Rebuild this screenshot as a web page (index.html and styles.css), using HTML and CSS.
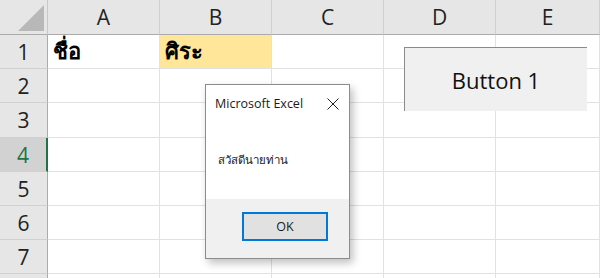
FILE: index.html
```html
<!DOCTYPE html>
<html lang="th">
<head>
    <meta charset="UTF-8">
    <title>Excel MsgBox</title>
    <link rel="stylesheet" href="styles.css">
</head>
<body>
    <div class="sheet">
        <div class="grid">
            <div class="corner"><span class="tri"></span></div>
            <div class="col-head">A</div>
            <div class="col-head">B</div>
            <div class="col-head">C</div>
            <div class="col-head">D</div>
            <div class="col-head">E</div>

            <div class="row-head">1</div>
            <div class="cell bold">ชื่อ</div>
            <div class="cell bold fill">ศิระ</div>
            <div class="cell"></div><div class="cell"></div><div class="cell"></div>

            <div class="row-head">2</div>
            <div class="cell"></div><div class="cell"></div><div class="cell"></div><div class="cell"></div><div class="cell"></div>

            <div class="row-head">3</div>
            <div class="cell"></div><div class="cell"></div><div class="cell"></div><div class="cell"></div><div class="cell"></div>

            <div class="row-head active">4</div>
            <div class="cell"></div><div class="cell"></div><div class="cell"></div><div class="cell"></div><div class="cell"></div>

            <div class="row-head">5</div>
            <div class="cell"></div><div class="cell"></div><div class="cell"></div><div class="cell"></div><div class="cell"></div>

            <div class="row-head">6</div>
            <div class="cell"></div><div class="cell"></div><div class="cell"></div><div class="cell"></div><div class="cell"></div>

            <div class="row-head">7</div>
            <div class="cell"></div><div class="cell"></div><div class="cell"></div><div class="cell"></div><div class="cell"></div>

            <div class="row-head"></div>
            <div class="cell"></div><div class="cell"></div><div class="cell"></div><div class="cell"></div><div class="cell"></div>
        </div>

        <div class="form-button">Button 1</div>

        <div class="msgbox">
            <div class="msg-title">
                <span>Microsoft Excel</span>
                <svg class="close" width="12" height="12" viewBox="0 0 12 12">
                    <path d="M0.5 0.5 L11.5 11.5 M11.5 0.5 L0.5 11.5" stroke="#222" stroke-width="1" fill="none"/>
                </svg>
            </div>
            <div class="msg-body">สวัสดีนายท่าน</div>
            <div class="msg-foot">
                <span class="ok-btn">OK</span>
            </div>
        </div>
    </div>
</body>
</html>
```

FILE: styles.css
```css
body { margin: 0; padding: 0; background: #fff; font-family: "Open Sans", "Noto Sans", sans-serif; overflow: hidden; }
.sheet { position: relative; width: 600px; height: 278px; overflow: hidden; }
.grid { display: grid; grid-template-columns: 48px 112px 112px 112px 112px 1fr; grid-template-rows: 35px 34px 34px 35px 34px 34px 34px 34px 34px; }
.grid > div { box-sizing: border-box; border-right: 1px solid #e1e1e1; border-bottom: 1px solid #e1e1e1; }
.corner { background: #e6e6e6; position: relative; border-bottom-color: #ababab !important; border-right-color: #c8c8c8 !important; }
.tri { position: absolute; right: 3px; bottom: 3px; width: 0; height: 0; border-left: 26px solid transparent; border-bottom: 26px solid #b8b8b8; }
.col-head { background: #e6e6e6; color: #222; font-size: 21px; display: flex; align-items: center; justify-content: center; border-right-color: #d0d0d0 !important; border-bottom-color: #ababab !important; }
.row-head { background: #e6e6e6; color: #222; font-size: 21px; display: flex; align-items: center; justify-content: center; border-right-color: #ababab !important; border-bottom-color: #d0d0d0 !important; }
.row-head.active { background: #d2d2d2; color: #217346; border-right: 2px solid #217346 !important; }
.cell { font-size: 22px; color: #000; padding-left: 5px; display: flex; align-items: center; }
.bold { font-weight: bold; font-family: "Noto Sans", "Open Sans", sans-serif; }
.fill { background: #ffe699; }

.form-button { position: absolute; left: 404px; top: 47px; width: 183px; height: 64px; box-sizing: border-box; background: #f0f0f0; border-top: 1px solid #8a8a8a; border-left: 1px solid #8a8a8a; font-size: 22px; color: #111; display: flex; align-items: center; justify-content: center; }

.msgbox { position: absolute; left: 205px; top: 84px; width: 145px; height: 175px; box-sizing: border-box; background: #fff; border: 1px solid #8c8c8c; box-shadow: 3px 4px 8px rgba(0, 0, 0, 0.25); display: flex; flex-direction: column; }
.msg-title { height: 36px; display: flex; align-items: center; justify-content: space-between; padding: 0 10px 0 9px; font-size: 12.5px; color: #1a1a1a; }
.close { margin-top: 1px; }
.msg-body { flex: 1; padding: 30px 0 0 12px; font-size: 11.5px; color: #1a1a1a; font-family: "Liberation Sans", "Noto Sans", sans-serif; }
.msg-foot { height: 59px; background: #f0f0f0; display: flex; justify-content: flex-end; align-items: flex-start; padding: 13px 21px 0 0; box-sizing: border-box; }
.ok-btn { width: 86px; height: 29px; box-sizing: border-box; border: 2px solid #0078d7; background: #e1e1e1; font-size: 12.5px; color: #1a1a1a; display: flex; align-items: center; justify-content: center; }
```
